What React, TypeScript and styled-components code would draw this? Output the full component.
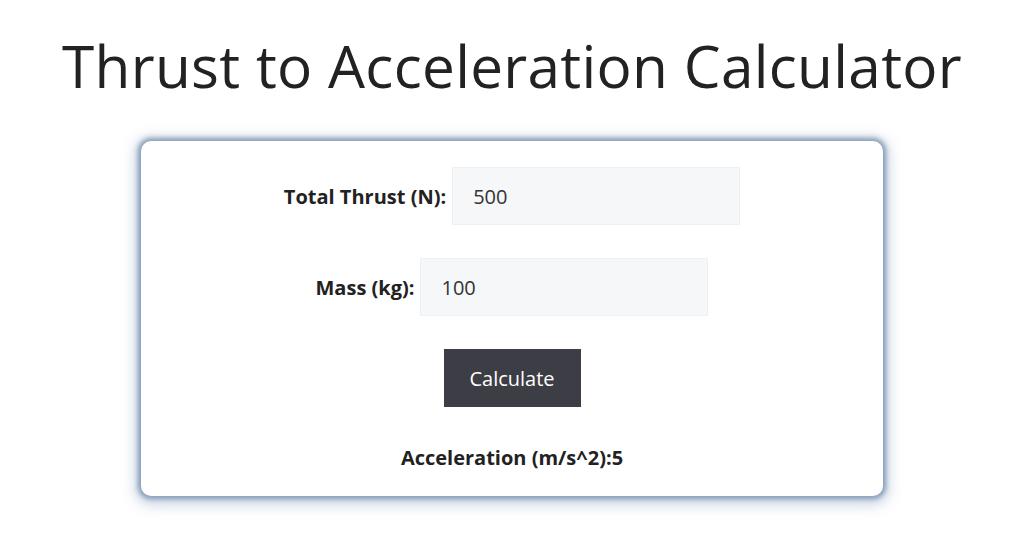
import React, { useState } from 'react';
import styled, { createGlobalStyle } from 'styled-components';

const GlobalStyle = createGlobalStyle`
  html, body {
    margin: 0;
    padding: 0;
    background: #ffffff;
    font-family: "Open Sans", "Noto Sans", "Liberation Sans", sans-serif;
    color: #212121;
  }
  * { box-sizing: border-box; }
`;

const Page = styled.div`
  display: flex;
  flex-direction: column;
  align-items: center;
  padding: 22px 0 40px;
`;

const Title = styled.h1`
  margin: 0 0 33px;
  font-size: 58.5px;
  font-weight: 400;
  line-height: 86px;
  color: #222222;
  letter-spacing: 0.3px;
`;

const Card = styled.div`
  width: 742px;
  background: #ffffff;
  border-radius: 10px;
  box-shadow: 0 0 5px 3px rgba(118, 144, 178, 0.85), 0 3px 14px 6px rgba(145, 168, 198, 0.45);
  padding: 26px 0 25px;
  display: flex;
  flex-direction: column;
  align-items: center;
`;

const Row = styled.div`
  display: flex;
  align-items: center;
  gap: 6px;
  margin-bottom: 33px;
`;

const Label = styled.label`
  font-size: 20px;
  font-weight: 700;
  color: #222222;
`;

const Input = styled.input`
  width: 288px;
  height: 58px;
  padding: 0 20px;
  font-family: inherit;
  font-size: 20px;
  color: #333333;
  background: #f6f7f8;
  border: 1px solid #eef0f2;
  border-radius: 0;
  outline: none;
`;

const Button = styled.button`
  width: 137px;
  height: 58px;
  background: #3d3d45;
  color: #ffffff;
  border: none;
  font-family: inherit;
  font-size: 20px;
  cursor: pointer;
`;

const Result = styled.div`
  margin-top: 37px;
  font-size: 20px;
  line-height: 27px;
  font-weight: 700;
  color: #222222;
`;

export default function App() {
  const [thrust, setThrust] = useState('500');
  const [mass, setMass] = useState('100');
  const [accel, setAccel] = useState<string>('5');

  const calculate = () => {
    const t = parseFloat(thrust);
    const m = parseFloat(mass);
    if (!isNaN(t) && !isNaN(m) && m !== 0) setAccel(String(t / m));
  };

  return (
    <>
      <GlobalStyle />
      <Page>
        <Title>Thrust to Acceleration Calculator</Title>
        <Card>
          <Row>
            <Label htmlFor="thrust">Total Thrust (N):</Label>
            <Input id="thrust" value={thrust} onChange={(e) => setThrust(e.target.value)} />
          </Row>
          <Row>
            <Label htmlFor="mass">Mass (kg):</Label>
            <Input id="mass" value={mass} onChange={(e) => setMass(e.target.value)} />
          </Row>
          <Button onClick={calculate}>Calculate</Button>
          <Result>Acceleration (m/s^2):{accel}</Result>
        </Card>
      </Page>
    </>
  );
}
